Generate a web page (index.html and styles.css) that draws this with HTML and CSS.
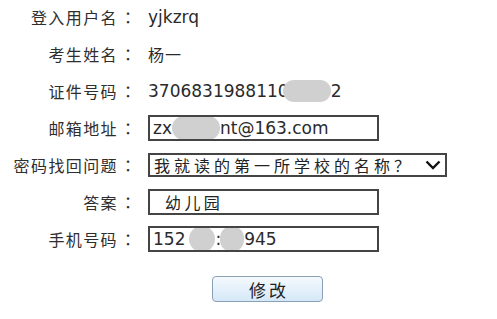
FILE: index.html
```html
<!DOCTYPE html>
<html lang="zh">
<head>
<meta charset="utf-8">
<link rel="stylesheet" href="styles.css">
</head>
<body>
<div class="form">
  <div class="label">登入用户名<span class="colon">：</span></div>
  <div class="value latin">yjkzrq</div>

  <div class="label">考生姓名<span class="colon">：</span></div>
  <div class="value">杨一</div>

  <div class="label">证件号码<span class="colon">：</span></div>
  <div class="value latin">370683198811<span class="tail">0</span><span class="blob b-id"></span><span class="tail">2</span></div>

  <div class="label">邮箱地址<span class="colon">：</span></div>
  <div class="value"><div class="box latin">zx<span class="blob b-mail"></span>nt@163.com</div></div>

  <div class="label">密码找回问题<span class="colon">：</span></div>
  <div class="value"><div class="box select"><span class="cjk-val">我就读的第一所学校的名称？</span><svg class="chev" width="16" height="10" viewBox="0 0 16 10"><path d="M1.5 1.5 L8 8 L14.5 1.5" fill="none" stroke="#111" stroke-width="2.4"/></svg></div></div>

  <div class="label">答案<span class="colon">：</span></div>
  <div class="value"><div class="box"><span class="cjk-val answer">幼儿园</span></div></div>

  <div class="label">手机号码<span class="colon">：</span></div>
  <div class="value"><div class="box latin">152<span class="blob b-ph1"></span>:<span class="blob b-ph2"></span>945</div></div>
</div>
<div class="actions">
  <div class="btn">修改</div>
</div>
</body>
</html>
```

FILE: styles.css
```css
html, body {
  margin: 0;
  padding: 0;
  background: #fff;
}
body {
  width: 497px;
  height: 319px;
  overflow: hidden;
  color: #2a2a2a;
  font-family: "Noto Sans CJK SC", "DejaVu Sans", sans-serif;
}
.form {
  display: grid;
  grid-template-columns: 136px 1fr;
  grid-auto-rows: 37px;
  column-gap: 12px;
  margin-top: -2px;
}
.label {
  display: flex;
  align-items: center;
  justify-content: flex-end;
  font-size: 16px;
  letter-spacing: 1.4px;
  color: #2e2e2e;
}
.colon {
  font-family: "Noto Sans CJK TC", "Noto Sans CJK SC", sans-serif;
  letter-spacing: 0;
  margin-left: 2px;
}
.value {
  display: flex;
  align-items: center;
  font-size: 16px;
  letter-spacing: 1px;
  white-space: nowrap;
}
.latin {
  font-family: "DejaVu Sans", "Noto Sans CJK SC", sans-serif;
  font-size: 17px;
  letter-spacing: 0;
}
.box {
  box-sizing: border-box;
  width: 231px;
  height: 26px;
  border: 2px solid #444;
  display: flex;
  align-items: center;
  padding-left: 3px;
  white-space: nowrap;
  overflow: hidden;
}
.select {
  width: 299px;
  height: 24px;
  justify-content: space-between;
  padding-left: 4px;
  padding-right: 4px;
}
.cjk-val {
  font-family: "Noto Sans CJK SC", sans-serif;
  font-size: 16px;
  letter-spacing: 4px;
  color: #222;
}
.answer {
  padding-left: 12px;
  letter-spacing: 3.4px;
}
.chev {
  display: block;
}
.blob {
  display: inline-block;
  height: 22px;
  background: #d0d0d0;
  border-radius: 11px;
}
.b-id {
  width: 48px;
  margin-left: -6px;
  margin-right: 0;
}
.tail {
  color: #2a2a2a;
}
.b-mail {
  width: 48px;
  height: 24px;
  border-radius: 12px;
}
.b-ph1 {
  width: 26px;
  height: 26px;
  border-radius: 13px;
  margin: 0 0 0 4px;
}
.b-ph2 {
  width: 24px;
  height: 26px;
  border-radius: 12px;
  margin-left: -1px;
}
.actions {
  display: flex;
  padding-left: 212px;
  margin-top: 19px;
}
.btn {
  box-sizing: border-box;
  width: 111px;
  height: 26px;
  border: 1px solid #8aa0b4;
  border-radius: 4px;
  background: linear-gradient(#f4f9fe, #d5e8f7);
  display: flex;
  align-items: center;
  justify-content: center;
  font-size: 17px;
  letter-spacing: 3px;
  padding-left: 3px;
  color: #1e1e1e;
}
```
